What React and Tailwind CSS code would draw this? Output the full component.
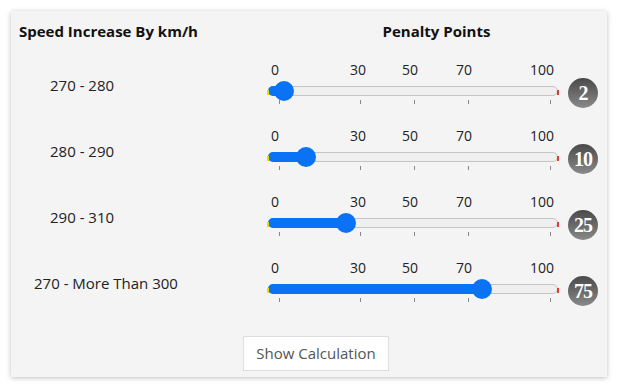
import React from 'react';

const rows = [
  { label: '270 - 280', value: 2, pad: 'pl-[39px]' },
  { label: '280 - 290', value: 10, pad: 'pl-[39px]' },
  { label: '290 - 310', value: 25, pad: 'pl-[39px]' },
  { label: '270 - More Than 300', value: 75, pad: 'pl-[23px]' },
];

// mark label centres / tick positions inside the 290px slider column
const marks = [
  { v: 0, label: 7 },
  { v: 30, label: 90 },
  { v: 50, label: 142 },
  { v: 70, label: 196 },
  { v: 100, label: 274 },
];

const toX = (v) => 10.5 + v * 2.71;

function Slider({ value }) {
  const x = toX(value);
  return (
    <div className="relative w-[290px] h-[66px]">
      {/* mark labels */}
      <div className="relative h-[22px] text-[14px] leading-[22px] text-[#222]">
        {marks.map((m) => (
          <span key={m.v} className="absolute top-0 -translate-x-1/2" style={{ left: m.label }}>
            {m.v}
          </span>
        ))}
      </div>

      {/* track */}
      <div className="relative mt-[5px] h-[10px] rounded-full border border-[#c4c4c4] bg-[#efefef]">
        <div className="absolute -left-px -top-px h-[10px] rounded-l-full bg-[#0a72f5]" style={{ width: x + 1 }} />
        <span className="absolute left-[-2px] top-[3px] w-[2px] h-[5px] bg-[#f2d600]" />
        <span className="absolute right-[-2px] top-[3px] w-[2px] h-[5px] bg-[#e53935]" />
        <span
          className="absolute top-1/2 w-[20px] h-[20px] -translate-x-1/2 -translate-y-1/2 rounded-full bg-[#0a72f5]"
          style={{ left: x - 1 }}
        />
      </div>

      {/* ticks */}
      <div className="relative mt-[4px] h-[4px]">
        {marks.map((m) => (
          <span key={m.v} className="absolute top-0 w-px h-[4px] bg-[#888]" style={{ left: toX(m.v) }} />
        ))}
      </div>
    </div>
  );
}

export default function App() {
  return (
    <div className="min-h-screen bg-white p-[11px]" style={{ fontFamily: '"Open Sans", sans-serif' }}>
      <div className="w-[596px] h-[366px] bg-[#f4f4f4] shadow-[0_1px_5px_rgba(0,0,0,0.25)] pt-[10px] pb-[6px] flex flex-col">
        {/* header */}
        <div className="flex h-[20px] items-center text-[15px] font-bold text-[#111]">
          <div className="w-[257px] pl-[8px]">Speed Increase By km/h</div>
          <div className="flex-1 text-center pr-[2px]">Penalty Points</div>
        </div>

        <div className="mt-[18px]">
          {rows.map((r) => (
            <div key={r.label} className="flex items-start h-[66px]">
              <div className={`w-[257px] pt-[15px] text-[15px] leading-[22px] text-[#222] ${r.pad}`}>{r.label}</div>
              <Slider value={r.value} />
              <div
                className="ml-[10px] mt-[19px] w-[30px] h-[30px] rounded-full bg-gradient-to-b from-[#4a4a4a] to-[#8a8a8a] flex items-center justify-center text-white font-bold text-[20px] tracking-[-1px]"
                style={{ fontFamily: '"Liberation Serif", serif' }}
              >
                {r.value}
              </div>
            </div>
          ))}
        </div>

        <div className="mt-[13px] flex justify-center">
          <button className="ml-[14px] w-[146px] h-[35px] bg-white border border-[#dedede] text-[15px] text-[#555]">
            Show Calculation
          </button>
        </div>
      </div>
    </div>
  );
}
